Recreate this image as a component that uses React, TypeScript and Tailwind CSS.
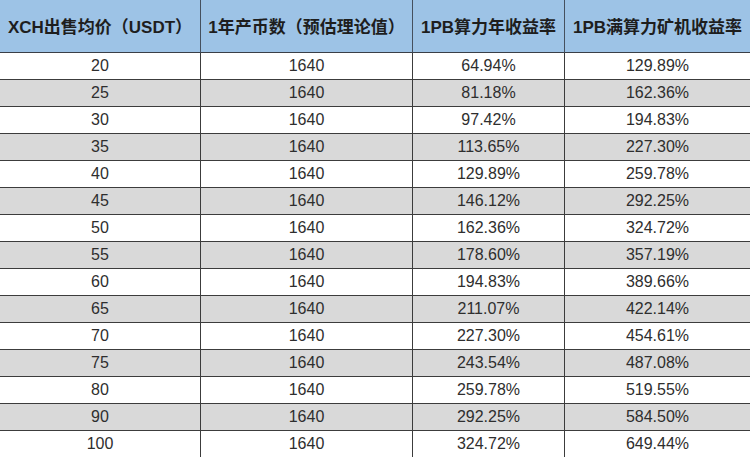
import React from 'react';

const ROWS: [string, string, string][] = [
  ['20', '64.94%', '129.89%'],
  ['25', '81.18%', '162.36%'],
  ['30', '97.42%', '194.83%'],
  ['35', '113.65%', '227.30%'],
  ['40', '129.89%', '259.78%'],
  ['45', '146.12%', '292.25%'],
  ['50', '162.36%', '324.72%'],
  ['55', '178.60%', '357.19%'],
  ['60', '194.83%', '389.66%'],
  ['65', '211.07%', '422.14%'],
  ['70', '227.30%', '454.61%'],
  ['75', '243.54%', '487.08%'],
  ['80', '259.78%', '519.55%'],
  ['90', '292.25%', '584.50%'],
  ['100', '324.72%', '649.44%'],
];

const HEAD = ['XCH出售均价（USDT）', '1年产币数（预估理论值）', '1PB算力年收益率', '1PB满算力矿机收益率'];

const FONT = { fontFamily: '"Liberation Sans", Arial, "Noto Sans CJK SC", sans-serif' };

export default function App(): React.JSX.Element {
  return (
    <div className="w-[750px] h-[457px] overflow-hidden bg-white text-[#2e2e2e]" style={FONT}>
      <div className="grid grid-cols-[201px_212px_152px_185px]">
        {HEAD.map((h, i) => (
          <div
            key={h}
            className={`h-[53px] pt-[3px] flex items-center justify-center whitespace-nowrap bg-[#9dc3e6] border-b border-[#3a3f47] text-[17px] font-bold text-[#1e1e1e] ${i < 3 ? 'border-r border-r-[#45505e]' : ''}`}
          >
            {h}
          </div>
        ))}
        {ROWS.map(([price, y1, y2], r) => {
          const bg = r % 2 === 1 ? 'bg-[#d9d9d9]' : 'bg-white';
          const cells = [price, '1640', y1, y2];
          return cells.map((c, i) => (
            <div
              key={`${r}-${i}`}
              className={`h-[27px] flex items-center justify-center border-b border-[#3c3c3c] text-[16px] ${bg} ${i < 3 ? 'border-r' : ''}`}
            >
              {c}
            </div>
          ));
        })}
      </div>
    </div>
  );
}
